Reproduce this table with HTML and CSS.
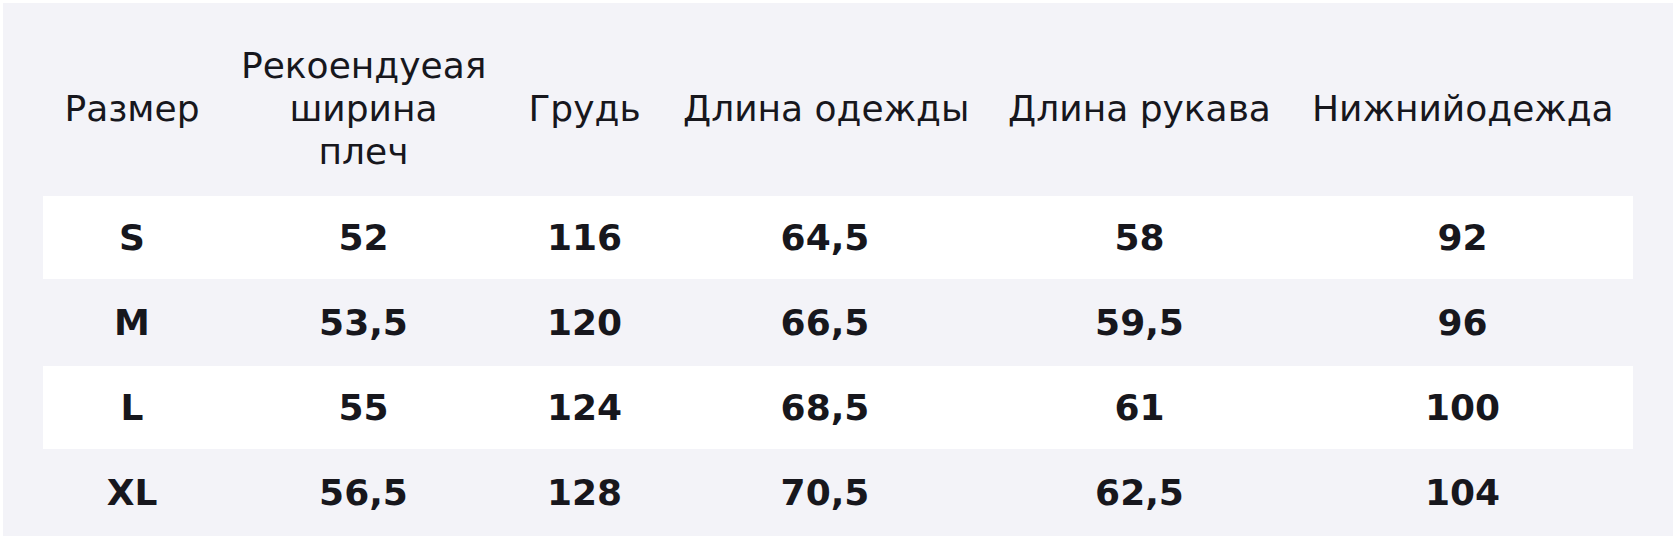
FILE: index.html
```html
<!DOCTYPE html>
<html lang="ru">
<head>
<meta charset="utf-8">
<title>Таблица размеров</title>
<link rel="stylesheet" href="styles.css">
</head>
<body>
<div class="panel">
  <table class="size-table">
    <colgroup>
      <col class="c1"><col class="c2"><col class="c3"><col class="c4"><col class="c5"><col class="c6">
    </colgroup>
    <thead>
      <tr>
        <th>Размер</th>
        <th>Рекоендуеая ширина плеч</th>
        <th>Грудь</th>
        <th class="nowrap">Длина одежды</th>
        <th class="nowrap">Длина рукава</th>
        <th class="nowrap">Нижнийодежда</th>
      </tr>
    </thead>
    <tbody>
      <tr class="odd"><td>S</td><td>52</td><td>116</td><td>64,5</td><td>58</td><td>92</td></tr>
      <tr><td>M</td><td>53,5</td><td>120</td><td>66,5</td><td>59,5</td><td>96</td></tr>
      <tr class="odd"><td>L</td><td>55</td><td>124</td><td>68,5</td><td>61</td><td>100</td></tr>
      <tr><td>XL</td><td>56,5</td><td>128</td><td>70,5</td><td>62,5</td><td>104</td></tr>
    </tbody>
  </table>
</div>
</body>
</html>
```
FILE: styles.css
```css
html, body {
  margin: 0;
  padding: 0;
  background: #ffffff;
}

.panel {
  margin: 3px 3px 0 3px;
  padding: 19px 40px 40px 40px;
  background: #f3f3f8;
  font-family: "DejaVu Sans", "Noto Sans", sans-serif;
  color: #17171d;
}

.size-table {
  width: 100%;
  table-layout: fixed;
  border-collapse: separate;
  border-spacing: 0 2px;
  font-size: 36px;
  line-height: 1.2;
}

.c1 { width: 178px; }
.c2 { width: 285px; }
.c3 { width: 157px; }
.c4 { width: 324px; }
.c5 { width: 305px; }
.c6 { width: 341px; }

.size-table th,
.size-table td {
  padding: 20px 20px;
  text-align: center;
  vertical-align: middle;
}

.size-table th {
  font-weight: normal;
}

.size-table th.nowrap {
  white-space: nowrap;
}

.size-table td {
  font-weight: bold;
}

.size-table tr.odd td {
  background: #ffffff;
}
```
